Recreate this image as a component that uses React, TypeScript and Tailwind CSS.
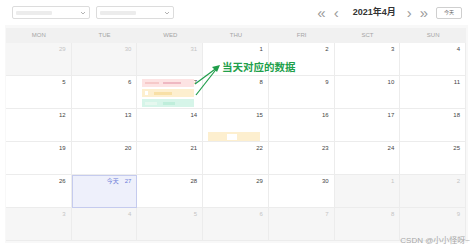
import React from "react";

type Cell = { d: number; out?: boolean; today?: boolean };

const weeks: Cell[][] = [
  [{ d: 29, out: true }, { d: 30, out: true }, { d: 31, out: true }, { d: 1 }, { d: 2 }, { d: 3 }, { d: 4 }],
  [5, 6, 7, 8, 9, 10, 11].map((d) => ({ d })),
  [12, 13, 14, 15, 16, 17, 18].map((d) => ({ d })),
  [19, 20, 21, 22, 23, 24, 25].map((d) => ({ d })),
  [{ d: 26 }, { d: 27, today: true }, { d: 28 }, { d: 29 }, { d: 30 }, { d: 1, out: true }, { d: 2, out: true }],
  [3, 4, 5, 6, 7, 8, 9].map((d) => ({ d, out: true })),
];

const heads = ["MON", "TUE", "WED", "THU", "FRI", "SCT", "SUN"];

function Select() {
  return (
    <div className="flex h-[13px] w-[78px] items-center justify-between rounded-[2px] border border-[#dcdcdc] bg-white px-[3px]">
      <div className="h-[4px] w-[36px] rounded-[1px] bg-[#ececec]" />
      <svg width="6" height="4" viewBox="0 0 6 4">
        <path d="M1 1 L3 3 L5 1" stroke="#aaa" strokeWidth="0.9" fill="none" />
      </svg>
    </div>
  );
}

export default function App() {
  return (
    <div
      className="relative h-[251px] w-[474px] overflow-hidden bg-white"
      style={{ fontFamily: '"Liberation Sans", "Noto Sans CJK SC", sans-serif' }}
    >
      {/* top bar */}
      <div className="flex h-[25px] items-center pl-[12px] pr-[12px]">
        <div className="flex gap-[6px]">
          <Select />
          <Select />
        </div>
        <div className="ml-auto flex items-center">
          <span className="text-[15px] leading-none text-[#9a9a9a]">«</span>
          <span className="ml-[8px] text-[15px] leading-none text-[#9a9a9a]">‹</span>
          <span className="ml-[14px] w-[40px] whitespace-nowrap text-center text-[9px] font-bold text-[#333]">2021年4月</span>
          <span className="ml-[14px] text-[15px] leading-none text-[#9a9a9a]">›</span>
          <span className="ml-[8px] text-[15px] leading-none text-[#9a9a9a]">»</span>
          <div className="ml-[8px] flex h-[12px] w-[26px] items-center justify-center rounded-[2px] border border-[#cfcfcf] text-[5px] text-[#666]">
            今天
          </div>
        </div>
      </div>

      {/* calendar */}
      <div className="ml-[5px] w-[463px] bg-[#f8f8f8] pl-[1px] pr-[2px] pt-[3px] pb-[2px]">
        <div className="grid h-[15px] grid-cols-7 bg-[#f1f1f1]">
          {heads.map((h) => (
            <div key={h} className="flex items-center justify-center text-[6px] text-[#a5a5a5]">
              {h}
            </div>
          ))}
        </div>
        {weeks.map((w, wi) => (
          <div key={wi} className="grid h-[33px] grid-cols-7">
            {w.map((c, ci) => (
              <div
                key={ci}
                className={
                  "relative border-b border-r border-[#ececec] " +
                  (c.today
                    ? "bg-[#eef0fb] outline outline-1 outline-[#c5cbee] -outline-offset-1"
                    : c.out
                    ? "bg-[#f6f6f6]"
                    : "bg-white")
                }
              >
                <div
                  className={
                    "flex justify-end gap-[6px] pr-[5px] pt-[3px] text-[6px] leading-none " +
                    (c.today ? "text-[#6f7fd8]" : c.out ? "text-[#c4c4c4]" : "text-[#444]")
                  }
                >
                  {c.today && <span>今天</span>}
                  <span>{c.d}</span>
                </div>
                {wi === 1 && ci === 2 && (
                  <div className="mt-[-6px] flex flex-col gap-[2px] pl-[5px] pr-[8px]">
                    <div className="flex h-[8px] items-center gap-[4px] bg-[#fde3e3] px-[3px]">
                      <div className="h-[2px] w-[14px] bg-[#f6c9c9]" />
                      <div className="h-[2px] w-[18px] bg-[#efb8c2]" />
                    </div>
                    <div className="flex h-[8px] items-center gap-[6px] bg-[#fdefcf] px-[3px]">
                      <div className="h-[4px] w-[3px] bg-white" />
                      <div className="h-[3px] w-[18px] bg-[#f8e0a6]" />
                    </div>
                    <div className="flex h-[8px] items-center gap-[6px] bg-[#d6f5e9] px-[3px]">
                      <div className="h-[3px] w-[12px] bg-[#e6f8ef]" />
                      <div className="h-[3px] w-[12px] bg-[#bfeedb]" />
                    </div>
                  </div>
                )}
                {wi === 2 && ci === 3 && (
                  <div className="mt-[14px] flex h-[9px] items-center bg-[#fdefcf] pl-[19px] pr-[6px] ml-[5px] mr-[8px]">
                    <div className="h-[6px] w-[10px] bg-white" />
                  </div>
                )}
              </div>
            ))}
          </div>
        ))}
      </div>

      {/* annotation */}
      <svg className="absolute left-0 top-0" width="474" height="251" viewBox="0 0 474 251">
        <path d="M195 84 L218 67" stroke="#1f9d4a" strokeWidth="1.2" fill="none" />
        <path d="M196 95 L218 67" stroke="#1f9d4a" strokeWidth="1.2" fill="none" />
        <path d="M220 65 L212 67 L217 72 Z" fill="#1f9d4a" />
      </svg>
      <div className="absolute left-[222px] top-[61px] text-[10.5px] font-bold leading-[13px] text-[#22a04b]">
        当天对应的数据
      </div>

      <div className="absolute right-[4px] top-[236px] text-[8px] leading-[10px] text-[#a8a8a8]">
        CSDN @小小怪呀~
      </div>
    </div>
  );
}
